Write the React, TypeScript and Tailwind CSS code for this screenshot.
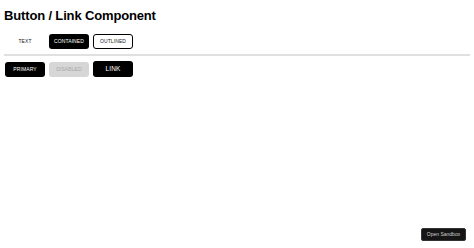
import React from "react";

const btn =
  "w-[40px] h-[15px] flex items-center justify-center rounded-[3px] text-[5px] leading-none uppercase tracking-[0.1px] font-medium";

export default function App() {
  return (
    <div
      className="relative w-[474px] h-[248px] bg-white overflow-hidden antialiased"
      style={{ fontFamily: '"Liberation Sans", Arial, sans-serif' }}
    >
      <div className="pl-[4px] pr-[4px]">
        <h1 className="pt-[8px] text-[13px] leading-[16px] font-bold text-black tracking-[-0.15px]">
          Button / Link Component
        </h1>
        <div className="mt-[10px] flex gap-[4px] pl-[1px] pb-[5px] border-b-2 border-[#e0e0e0]">
          <button className={`${btn} text-[#222] bg-transparent`}>Text</button>
          <button className={`${btn} text-white bg-black`}>Contained</button>
          <button className={`${btn} text-[#222] bg-white border border-black`}>Outlined</button>
        </div>
        <div className="mt-[6px] flex gap-[4px] pl-[1px]">
          <button className={`${btn} text-white bg-black`}>Primary</button>
          <button className={`${btn} text-[#a8a8a8] bg-[#d6d6d6]`}>Disabled</button>
          <a className={`${btn} h-[16px] -mt-[1px] text-white bg-black text-[6.5px]`}>Link</a>
        </div>
      </div>
      <div className="absolute right-[8px] bottom-[7px] w-[45px] h-[13px] flex items-center justify-center rounded-[2px] bg-[#151515] border border-[#333] text-[5px] text-[#d0d0d0] leading-none">
        Open Sandbox
      </div>
    </div>
  );
}
